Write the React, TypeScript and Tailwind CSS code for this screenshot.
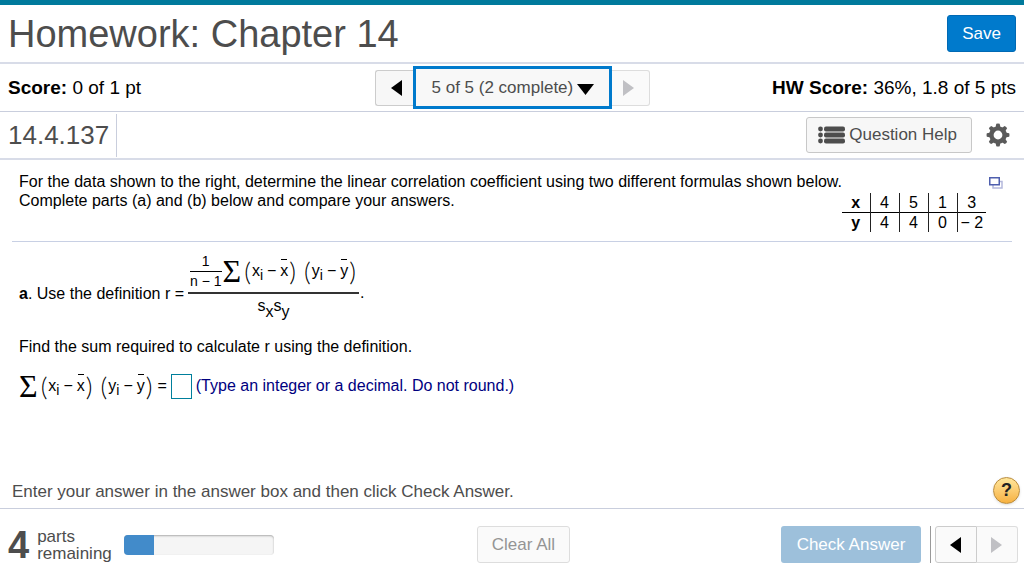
import type { ReactNode } from "react";
import { clsx } from "clsx";

const DATA = {
  x: ["4", "5", "1", "3"],
  y: ["4", "4", "0", "− 2"],
};

function Triangle({ dir, className }: { dir: "left" | "right" | "down"; className?: string }) {
  const points = {
    left: "11,0 11,16 0,8",
    right: "0,0 0,16 11,8",
    down: "0,0 17,0 8.5,11",
  }[dir];
  const down = dir === "down";

  return (
    <svg
      width={down ? 17 : 11}
      height={down ? 11 : 16}
      className={clsx("fill-current", className)}
      aria-hidden="true"
    >
      <polygon points={points} />
    </svg>
  );
}

function GearIcon() {
  return (
    <svg width="24" height="24" viewBox="-12 -12 24 24" aria-hidden="true">
      <g fill="#5a5a5a">
        {[0, 45, 90, 135, 180, 225, 270, 315].map((angle) => (
          <path
            key={angle}
            d="M-2.6 -7 L-1.7 -11.2 Q0 -11.8 1.7 -11.2 L2.6 -7 Z"
            transform={`rotate(${angle})`}
          />
        ))}
      </g>
      <circle r="6.6" fill="none" stroke="#5a5a5a" strokeWidth="4.4" />
    </svg>
  );
}

function ListIcon() {
  return (
    <svg width="27" height="18" viewBox="0 0 27 18" fill="#4d4d4d" aria-hidden="true">
      {[3, 9, 15].map((y) => (
        <g key={y}>
          <circle cx="2.5" cy={y} r="2.4" />
          <rect x="6" y={y - 2.5} width="21" height="5" rx="2" />
        </g>
      ))}
    </svg>
  );
}

function PopupIcon() {
  return (
    <svg width="14" height="12" viewBox="0 0 14 12" fill="none" aria-hidden="true">
      <rect x="4" y="4.5" width="9" height="6.5" fill="#fff" stroke="#b4b8dc" strokeWidth="1.5" />
      <rect x="0.75" y="0.75" width="9.5" height="7" fill="#fff" stroke="#4f5fae" strokeWidth="1.5" />
    </svg>
  );
}

function Bar({ children }: { children: ReactNode }) {
  return (
    <span className="relative inline-block">
      {children}
      <span className="absolute left-px right-px top-0 h-px bg-black" />
    </span>
  );
}

function Paren({ children }: { children: string }) {
  return (
    <span className="px-px font-['Lato',sans-serif] text-[26px] font-light leading-6">
      {children}
    </span>
  );
}

function Deviation({ name }: { name: string }) {
  return (
    <span className="flex items-center">
      <Paren>(</Paren>
      <span>{name}</span>
      <span className="mt-2 text-sm leading-4">i</span>
      <span className="mx-1">−</span>
      <Bar>{name}</Bar>
      <Paren>)</Paren>
    </span>
  );
}

function SumOfProducts() {
  return (
    <span className="flex items-center">
      <span className="mr-0.5 font-['Liberation_Serif',serif] text-[32px] leading-8">Σ</span>
      <Deviation name="x" />
      <span className="w-1.5" />
      <Deviation name="y" />
    </span>
  );
}

function Definition() {
  return (
    <span className="flex flex-col">
      <span className="flex h-[42px] items-center px-0.5">
        <span className="mr-px flex flex-col text-center text-sm leading-[19px]">
          <span>1</span>
          <span className="border-t border-black">n − 1</span>
        </span>
        <SumOfProducts />
      </span>
      <span className="h-0.5 bg-[#333]" />
      <span className="flex h-[42px] justify-center pt-0.5 leading-5">
        <span>s</span>
        <span className="mt-1.5">x</span>
        <span>s</span>
        <span className="mt-1.5">y</span>
      </span>
    </span>
  );
}

function DataTable() {
  return (
    <table className="mt-[21px] shrink-0 border-collapse text-center leading-[19px]">
      <tbody>
        {Object.entries(DATA).map(([name, values]) => (
          <tr key={name} className="border-b border-black last:border-b-0">
            <th scope="row" className="w-7 p-0 font-bold">
              {name}
            </th>
            {values.map((value, i) => (
              <td key={i} className="w-[29px] whitespace-nowrap border-l border-[#222] p-0">
                {value}
              </td>
            ))}
          </tr>
        ))}
      </tbody>
    </table>
  );
}

export default function App() {
  return (
    <div className="flex min-h-screen flex-col border-t-[5px] border-[#007a9c] bg-white font-['Liberation_Sans',Arial,sans-serif] text-[17px] text-[#4d4d4d]">
      <header className="flex h-[59px] items-center justify-between border-b-2 border-[#d8dce8] px-2">
        <h1 className="text-[38px] leading-[48px]">Homework: Chapter 14</h1>
        <button className="h-[37px] rounded-[3px] border border-[#0069b4] bg-[#007acc] px-3.5 text-white">
          Save
        </button>
      </header>

      <nav className="grid h-12 grid-cols-[1fr_auto_1fr] items-center border-b border-[#c9cedd] pl-2 pr-2 text-[19px] text-black">
        <p className="pt-0.5">
          <b>Score:</b> 0 of 1 pt
        </p>
        <div className="flex items-center">
          <button
            aria-label="Previous question"
            className="flex h-9 w-[38px] items-center justify-center rounded-l-[3px] border border-r-0 border-[#ccc] bg-[#f7f7f7] pl-1"
          >
            <Triangle dir="left" />
          </button>
          <div className="relative">
            <select
              aria-label="Question"
              className="block h-[43px] w-[199px] appearance-none border-[3px] border-[#007acc] bg-[#f8f8f8] pl-4 text-[17px] text-[#4d4d4d]"
            >
              <option>5 of 5 (2 complete)</option>
            </select>
            <Triangle dir="down" className="pointer-events-none absolute right-[18px] top-[18px]" />
          </div>
          <button
            aria-label="Next question"
            disabled
            className="flex h-9 w-[38px] items-center justify-center rounded-r-[3px] border border-l-0 border-[#ddd] bg-[#fafafa] pr-1 text-[#c0c0c4]"
          >
            <Triangle dir="right" />
          </button>
        </div>
        <p className="pt-0.5 text-right">
          <b>HW Score:</b> 36%, 1.8 of 5 pts
        </p>
      </nav>

      <div className="flex h-12 items-center justify-between border-b-2 border-[#d8dce8] pr-3.5">
        <h2 className="flex h-[43px] items-center border-r border-[#c9cedd] pl-2 pr-[7px] text-[26px]">
          14.4.137
        </h2>
        <div className="flex items-center gap-3.5">
          <button className="flex h-9 items-center gap-1 rounded-[3px] border border-[#c8c8c8] bg-[#f7f7f7] pl-[11px] pr-3.5">
            <ListIcon />
            Question Help
          </button>
          <button aria-label="Settings">
            <GearIcon />
          </button>
        </div>
      </div>

      <main className="flex-1 px-3 text-base text-black">
        <section className="flex h-[82px] items-start border-b border-[#c8d0e4] pl-[7px] pt-3">
          <p className="flex-1 whitespace-nowrap leading-[19px]">
            For the data shown to the right, determine the linear correlation coefficient using two
            different formulas shown below.
            <br />
            Complete parts (a) and (b) below and compare your answers.
          </p>
          <DataTable />
          <button aria-label="Open data table" className="ml-[3px] mr-[9px] mt-[5px]">
            <PopupIcon />
          </button>
        </section>

        <section className="pl-[7px] pt-2">
          <div className="flex items-center">
            <p className="mr-1 pt-0.5">
              <b>a</b>. Use the definition r =
            </p>
            <Definition />
            <span className="ml-px">.</span>
          </div>
          <p className="leading-[22px]">Find the sum required to calculate r using the definition.</p>
          <label className="mt-3 flex items-center">
            <SumOfProducts />
            <span className="mx-1">=</span>
            <input type="text" className="mr-1 h-[25px] w-[21px] border border-[#007f9c]" />
            <span className="text-[#00007f]">(Type an integer or a decimal. Do not round.)</span>
          </label>
        </section>
      </main>

      <div className="flex items-center justify-between pb-1 pl-3 pr-1">
        <p className="pt-0.5">Enter your answer in the answer box and then click Check Answer.</p>
        <button
          aria-label="Help"
          className="size-[27px] rounded-full border border-[#b98b3c] bg-linear-to-b from-[#ffe69a] to-[#f6b13f] text-lg font-bold leading-6 text-[#222] shadow"
        >
          ?
        </button>
      </div>

      <footer className="flex h-[72px] items-center justify-between border-t border-[#c9cedd] pl-2 pr-1.5">
        <div className="flex items-center">
          <b className="pt-0.5 text-[38px]">4</b>
          <span className="ml-2 leading-[17px]">
            parts
            <br />
            remaining
          </span>
          <div
            role="progressbar"
            aria-label="Parts completed"
            aria-valuenow={20}
            className="ml-3 h-5 w-[150px] overflow-hidden rounded-[4px] bg-[#f5f5f5] shadow-[inset_0_1px_2px_rgba(0,0,0,0.3)]"
          >
            <div className="h-full w-1/5 bg-[#428bca]" />
          </div>
        </div>
        <button className="mr-2 h-[37px] rounded-[3px] border border-[#ddd] bg-[#fafafa] px-3.5 text-[#949494]">
          Clear All
        </button>
        <div className="flex items-center">
          <button className="h-[37px] w-[140px] rounded-[3px] bg-[#9dc0db] text-white">
            Check Answer
          </button>
          <span className="ml-[9px] mr-1 h-[37px] w-px bg-[#999]" />
          <button
            aria-label="Previous part"
            className="flex h-[37px] w-[42px] items-center justify-center rounded-l-[3px] border border-[#ccc] bg-[#fafafa] text-black"
          >
            <Triangle dir="left" />
          </button>
          <button
            aria-label="Next part"
            disabled
            className="flex h-[37px] w-[41px] items-center justify-center rounded-r-[3px] border border-l-0 border-[#ddd] bg-[#fafafa] text-[#c0c0c4]"
          >
            <Triangle dir="right" />
          </button>
        </div>
      </footer>
    </div>
  );
}
